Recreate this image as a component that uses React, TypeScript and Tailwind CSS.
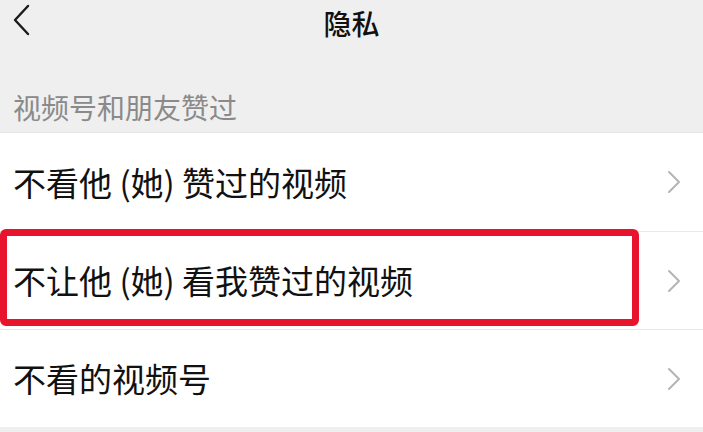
import React from 'react';

const rows = [
  { label: '不看他 (她) 赞过的视频', marked: false },
  { label: '不让他 (她) 看我赞过的视频', marked: true },
  { label: '不看的视频号', marked: false },
];

function Chevron() {
  return (
    <svg width="14" height="24" viewBox="0 0 14 24" fill="none" className="shrink-0">
      <path d="M2 2l10 10-10 10" stroke="#b5b5b5" strokeWidth="2" strokeLinecap="round" strokeLinejoin="round" />
    </svg>
  );
}

export default function App() {
  return (
    <div
      className="w-[703px] h-[432px] overflow-hidden bg-[#efefef] text-[#111]"
      style={{ fontFamily: '"Noto Sans CJK SC", "Noto Sans", sans-serif' }}
    >
      {/* Top bar */}
      <div className="h-[46px] grid grid-cols-[1fr_auto_1fr] items-center px-[12px]">
        <button className="justify-self-start pb-[6px]">
          <svg width="20" height="32" viewBox="0 0 20 32" fill="none">
            <path d="M16 2L3 16l13 14" stroke="#1a1a1a" strokeWidth="2.4" strokeLinecap="round" strokeLinejoin="round" />
          </svg>
        </button>
        <h1 className="text-[28px] leading-none font-medium">隐私</h1>
        <div />
      </div>

      {/* Section title */}
      <div className="h-[86px] pl-[13px] pt-[47px] text-[28px] leading-none text-[#8a8a8a]">
        视频号和朋友赞过
      </div>

      {/* Option list */}
      <div className="bg-white border-t border-[#e6e6e6]">
        {rows.map((row, i) => (
          <div
            key={row.label}
            className={`relative h-[98px] flex items-center pl-[13px] pr-[22px] ${i > 0 ? 'border-t border-[#e8e8e8]' : ''}`}
          >
            {row.marked && (
              <div className="absolute left-0 top-[-3px] w-[639px] h-[97px] border-[7px] border-[#e8132d] rounded-[6px]" />
            )}
            <span className="flex-1 text-[33px] leading-none">{row.label}</span>
            <Chevron />
          </div>
        ))}
      </div>
    </div>
  );
}
